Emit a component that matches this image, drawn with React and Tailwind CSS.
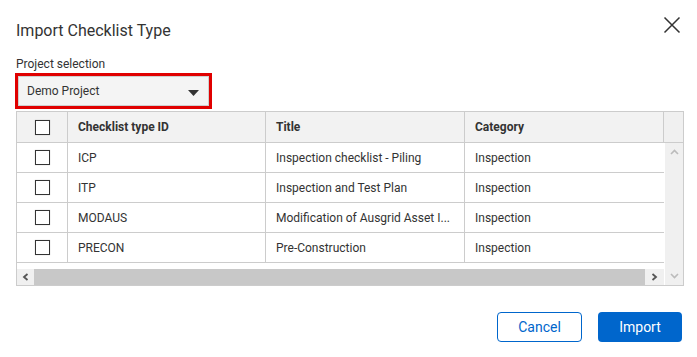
import React from "react";

const rows = [
  { id: "ICP", title: "Inspection checklist - Piling", cat: "Inspection" },
  { id: "ITP", title: "Inspection and Test Plan", cat: "Inspection" },
  { id: "MODAUS", title: "Modification of Ausgrid Asset I...", cat: "Inspection" },
  { id: "PRECON", title: "Pre-Construction", cat: "Inspection" },
];

function Box() {
  return <div className="w-[15px] h-[15px] border border-[#333] bg-white shadow-[0_0_1px_rgba(0,0,0,0.25)]" />;
}

export default function App() {
  return (
    <div className="w-[697px] h-[357px] bg-white text-[#333] font-['Roboto',sans-serif] relative overflow-hidden">
      <div className="flex justify-between items-start pt-[21px] pl-[16px] pr-[15px]">
        <div className="text-[16px] leading-5 text-[#333]">Import Checklist Type</div>
        <svg width="18" height="18" viewBox="0 0 18 18" className="-mt-[5px] mr-[1px]">
          <path d="M1.5 1.5 L16.5 16.5 M16.5 1.5 L1.5 16.5" stroke="#333" strokeWidth="1.5" fill="none" />
        </svg>
      </div>
      <div className="pl-[16px] mt-[16px] text-[12px] leading-[14px] text-[#333]">Project selection</div>
      <div className="ml-[15px] mt-[2px] w-[197px] h-[36px] border-[3px] border-[#e00000]">
        <div className="h-full border border-[#cfcfcf] bg-[#f4f4f4] flex items-center justify-between pl-[8px] pr-[9px]">
          <span className="text-[12px] text-[#333]">Demo Project</span>
          <svg width="11" height="6" viewBox="0 0 11 6" className="mt-[3px]">
            <path d="M0 0 L11 0 L5.5 6 Z" fill="#333" />
          </svg>
        </div>
      </div>
      <div className="ml-[16px] mt-[2px] w-[668px] border border-[#cccccc]">
        <div className="flex h-[31px] bg-[#f2f2f2] border-b border-[#cccccc] text-[12px] font-bold text-[#333]">
          <div className="w-[51px] border-r border-[#cccccc] flex items-center justify-center"><Box /></div>
          <div className="w-[198px] border-r border-[#cccccc] flex items-center pl-[10px]">Checklist type ID</div>
          <div className="w-[199px] border-r border-[#cccccc] flex items-center pl-[10px]">Title</div>
          <div className="w-[199px] border-r border-[#cccccc] flex items-center pl-[10px]">Category</div>
          <div className="flex-1 bg-[#f0f0f0]" />
        </div>
        <div className="flex">
          <div className="w-[647px] flex flex-col">
            {rows.map((r) => (
              <div key={r.id} className="flex h-[30px] border-b border-[#cccccc] text-[12px] text-[#333]">
                <div className="w-[51px] border-r border-[#cccccc] flex items-center justify-center"><Box /></div>
                <div className="w-[198px] border-r border-[#cccccc] flex items-center pl-[10px]">{r.id}</div>
                <div className="w-[199px] border-r border-[#cccccc] flex items-center pl-[10px]">{r.title}</div>
                <div className="w-[199px] flex items-center pl-[10px]">{r.cat}</div>
              </div>
            ))}
            <div className="h-[6px]" />
            <div className="flex h-[16px] bg-[#f0f0f0]">
              <div className="w-[17px] flex items-center justify-center">
                <svg width="7" height="8" viewBox="0 0 7 8"><path d="M5.5 1 L2 4 L5.5 7" stroke="#555" strokeWidth="1.8" fill="none" /></svg>
              </div>
              <div className="w-[611px] bg-[#c8c8c8]" />
              <div className="flex-1 flex items-center justify-center">
                <svg width="7" height="8" viewBox="0 0 7 8"><path d="M1.5 1 L5 4 L1.5 7" stroke="#555" strokeWidth="1.8" fill="none" /></svg>
              </div>
            </div>
          </div>
          <div className="flex-1 ml-[1px] bg-[#f0f0f0] flex flex-col items-center justify-between py-[6px]">
            <svg width="9" height="6" viewBox="0 0 9 6"><path d="M1 5 L4.5 1.5 L8 5" stroke="#bbb" strokeWidth="1.6" fill="none" /></svg>
            <svg width="9" height="6" viewBox="0 0 9 6"><path d="M1 1 L4.5 4.5 L8 1" stroke="#bbb" strokeWidth="1.6" fill="none" /></svg>
          </div>
        </div>
      </div>
      <div className="flex justify-end gap-[16px] pr-[15px] mt-[26px]">
        <button className="w-[85px] h-[30px] rounded-[4px] border border-[#0066cc] text-[#0066cc] text-[14px] bg-white">Cancel</button>
        <button className="w-[84px] h-[30px] rounded-[4px] bg-[#0066cc] text-white text-[14px]">Import</button>
      </div>
    </div>
  );
}
